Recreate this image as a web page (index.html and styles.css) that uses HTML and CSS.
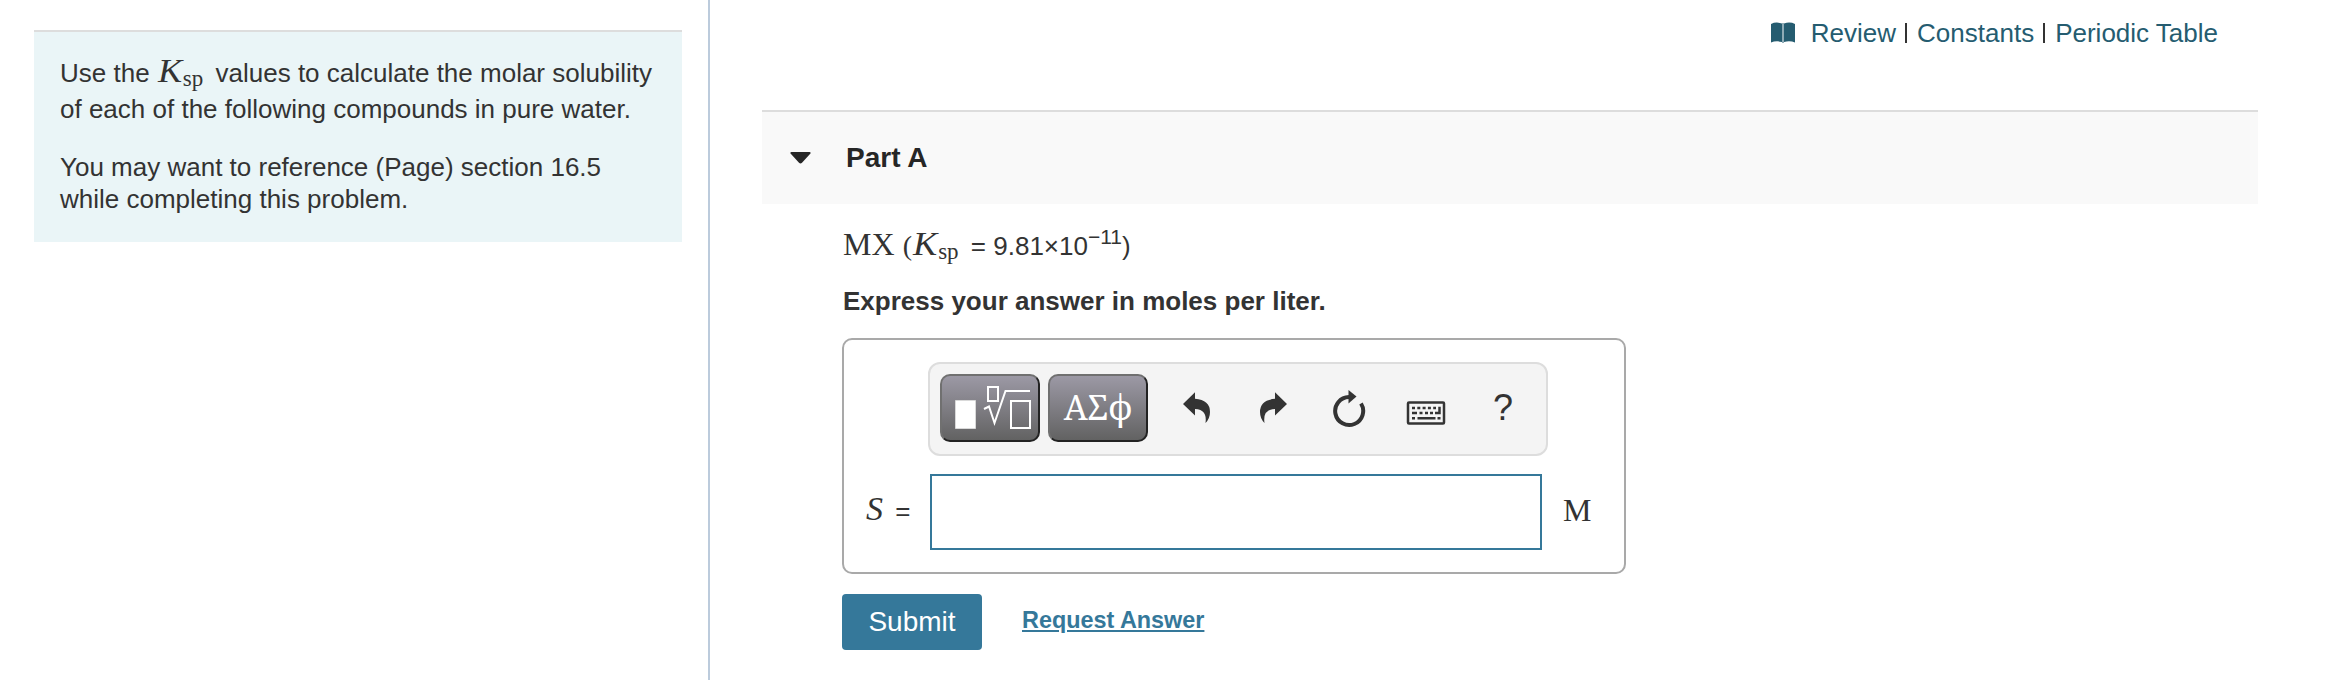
FILE: index.html
```html
<!DOCTYPE html>
<html lang="en">
<head>
  <meta charset="UTF-8">
  <title>Part A</title>
  <meta name="viewport" content="width=device-width, initial-scale=1.0">
  <link rel="stylesheet" href="styles.css">
</head>
<body>

<aside class="sidebar">
  <div class="intro">
    <p class="intro-first">Use the <span class="math k">K</span><span class="math sp">sp</span> values to calculate the molar solubility<br>of each of the following compounds in pure water.</p>
    <p>You may want to reference (Page) section 16.5<br>while completing this problem.</p>
  </div>
</aside>

<main class="content">
  <nav class="resources">
    <svg class="book" viewBox="0 0 24 22">
      <path d="M0 2Q5-.5 11 1.500V20Q5 18.500 0 20.500ZM24 2Q19-.5 13 1.500V20Q19 18.500 24 20.500Z" fill="#255c70"/>
      <path d="M12 1V21" stroke="#8fabb6" stroke-width="2"/>
    </svg>
    <a href="#">Review</a><span class="bar"></span><a href="#">Constants</a><span class="bar"></span><a href="#">Periodic Table</a>
  </nav>

  <section class="part">
    <header class="part-header">
      <svg class="caret" viewBox="0 0 22 12"><path d="M1.500 0H19.500Q21.500 .5 20 2L12 10.800Q10.500 12 9 10.800L1 2Q-.5 .5 1.500 0Z" fill="#262626"/></svg>
      <h2>Part A</h2>
    </header>

    <div class="part-body">
      <p class="compound"><span class="math">MX</span> <span class="paren math">(</span><span class="math k">K</span><span class="math sp">sp</span> <span class="eq">=</span> 9.81×10<span class="exp">−11</span>)</p>
      <p class="instruction">Express your answer in moles per liter.</p>

      <form class="answer">
        <div class="toolbar">
          <button type="button" class="tool">
            <svg viewBox="0 0 96 64" fill="none" stroke="#fff" stroke-width="2">
              <path d="M13.500 24.500H33.500V52.500H13.500Z" fill="#fff" stroke="#d9d9d9" stroke-width="1"/>
              <path d="M46 11H56V25H46Z"/>
              <path d="M42 33L47 30.500L52.500 47L63.500 15H88"/>
              <path d="M69 25H88V52H69Z"/>
            </svg>
          </button>
          <button type="button" class="tool greek">ΑΣϕ</button>
          <svg class="icon" viewBox="0 0 40 40"><path d="M5 16L17 4.300V10.800Q32 12 32 24Q32 30.500 27.500 35Q29.500 21.500 17 21V27.500Z"/></svg>
          <svg class="icon redo" viewBox="0 0 40 40"><path d="M35 16L23 4.300V10.800Q8 12 8 24Q8 30.500 12.500 35Q10.500 21.500 23 21V27.500Z"/></svg>
          <svg class="icon reset" viewBox="0 0 40 40"><path d="M20 9A14 14 0 1 0 32 15.500" fill="none" stroke="#333" stroke-width="4"/><path d="M19.500 2L27.500 8.500L19.500 15.500Z"/></svg>
          <svg class="icon keyboard" viewBox="0 0 40 40">
            <rect x="2" y="14.500" width="36" height="21" rx="1" fill="none" stroke="#333" stroke-width="2.500"/>
            <path d="M6 20H30M6 30.300H9M31.500 30.300H34.500" fill="none" stroke="#333" stroke-width="2.500" stroke-dasharray="3 2.300"/>
            <path d="M6 25H11M13.500 25H16.500M19 25H22M24 25H27M29 25H33.500V18.800M11.500 30.300H29.500" fill="none" stroke="#333" stroke-width="2.500"/>
          </svg>
          <span class="help">?</span>
        </div>
        <div class="entry">
          <label for="solubility"><span class="math s">S</span> <span class="equals">=</span></label>
          <input type="text" id="solubility" name="solubility" autocomplete="off">
          <span class="math unit">M</span>
        </div>
      </form>

      <div class="actions">
        <button type="submit" class="submit">Submit</button>
        <a href="#" class="request">Request Answer</a>
      </div>
    </div>
  </section>
</main>

</body>
</html>
```
FILE: styles.css
```css
* {
  box-sizing: border-box;
}

body {
  font-family: "Liberation Sans", Arial, sans-serif;
  font-size: 26px;
  color: #333;
  background: #fff;
  margin: 0;
  display: flex;
  height: 680px;
  overflow: hidden;
}

p, h2 {
  margin: 0;
}

.sidebar {
  width: 710px;
  padding: 30px 26px 0 34px;
  border-right: 2px solid #bccbdc;
}

.intro {
  height: 212px;
  padding: 23px 0 0 26px;
  background: #eaf5f7;
  border-top: 2px solid #ddd;
  line-height: 32px;
  white-space: nowrap;
}

.intro-first {
  line-height: 36px;
  margin-bottom: 24px;
}

.math {
  font-family: "Liberation Serif", "Times New Roman", serif;
  font-size: 32px;
  line-height: 0;
}

.k {
  font-style: italic;
  font-size: 33px;
  display: inline-block;
  transform: scaleX(1.1);
  margin: 0 2px;
}

.sp {
  font-size: 23px;
  position: relative;
  top: 4px;
  margin-right: 5px;
}

.content {
  flex: 1;
  padding: 0 94px 0 52px;
}

.resources {
  display: flex;
  align-items: center;
  justify-content: flex-end;
  height: 66px;
  margin-right: 40px;
  margin-bottom: 44px;
}

.resources a {
  color: #255c70;
  text-decoration: none;
}

.book {
  width: 24px;
  height: 22px;
  margin-right: 16px;
}

.bar {
  width: 2px;
  height: 20px;
  margin: 0 10px 0 9px;
  background: #333;
}

.part-header {
  display: flex;
  align-items: center;
  height: 94px;
  padding-left: 28px;
  background: #f9f9f9;
  border-top: 2px solid #ddd;
}

.part-header h2 {
  font-size: 28px;
  line-height: 32px;
  margin-left: 34px;
  color: #262626;
}

.caret {
  width: 22px;
  height: 12px;
}

.part-body {
  padding-left: 80px;
}

.compound {
  height: 84px;
  line-height: 84px;
  padding-left: 1px;
  white-space: nowrap;
}

.paren {
  font-size: 28px;
  margin-left: 1px;
}

.exp {
  font-size: 21px;
  line-height: 0;
  position: relative;
  top: -11px;
}

.instruction {
  font-weight: bold;
  line-height: 26px;
  height: 50px;
  padding-left: 1px;
}

.answer {
  width: 784px;
  height: 236px;
  border: 2px solid #a9a9a9;
  border-radius: 10px;
  padding-top: 22px;
}

.toolbar {
  display: flex;
  align-items: center;
  width: 620px;
  height: 94px;
  margin-left: 84px;
  padding: 0 10px 2px;
  background: #f4f4f4;
  border: 2px solid #ddd;
  border-radius: 12px;
}

.tool {
  width: 100px;
  height: 68px;
  margin-right: 8px;
  padding: 0;
  border: 2px solid;
  border-color: #707070 #222 #222 #707070;
  border-radius: 10px;
  background: linear-gradient(#9c99a5, #626262);
  color: #fff;
}

.tool svg {
  display: block;
  width: 96px;
  height: 64px;
}

.greek {
  font: 34px/60px "Noto Serif", "Liberation Serif", serif;
  padding-bottom: 3px;
}

.icon {
  width: 40px;
  height: 40px;
  margin-left: 22px;
  fill: #333;
}

.redo {
  margin-left: 34px;
}

.reset,
.keyboard {
  margin-left: 37px;
}

.help {
  font-size: 36px;
  margin-left: 47px;
}

.entry {
  display: flex;
  align-items: center;
  height: 76px;
  margin-top: 18px;
}

.entry label {
  width: 86px;
  padding-left: 22px;
  padding-bottom: 2px;
  white-space: nowrap;
}

.s {
  font-style: italic;
  font-size: 34px;
}

.equals {
  margin-left: 5px;
}

.entry input {
  width: 612px;
  height: 76px;
  border: 2px solid #35789a;
  padding: 0 10px;
  font-size: 28px;
  background: #fff;
}

.unit {
  margin-left: 21px;
  margin-bottom: 5px;
}

.actions {
  display: flex;
  align-items: center;
  margin-top: 20px;
}

.submit {
  width: 140px;
  height: 56px;
  border: none;
  border-radius: 4px;
  background: #35789a;
  color: #fff;
  font: 28px "Liberation Sans", Arial, sans-serif;
}

.request {
  margin-left: 40px;
  margin-bottom: 4px;
  font-size: 23.4px;
  font-weight: bold;
  color: #35789a;
}
```
